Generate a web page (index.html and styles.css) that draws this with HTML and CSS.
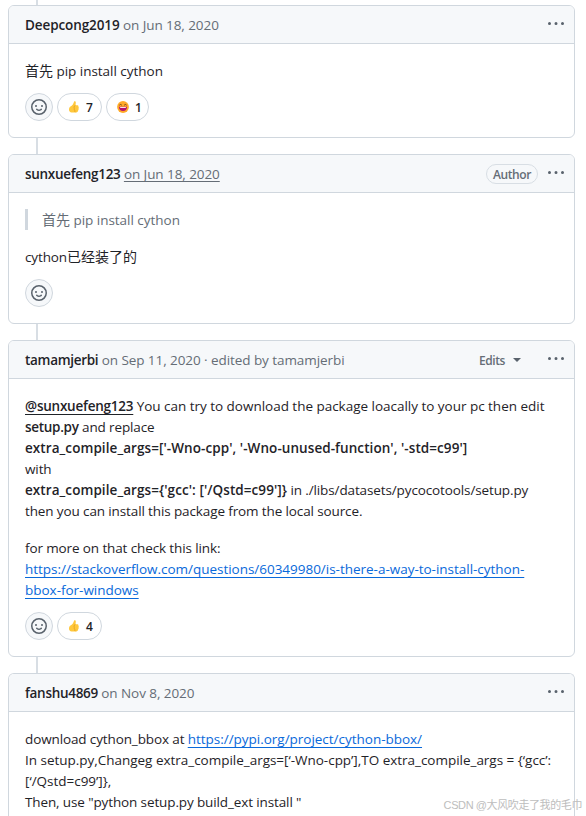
FILE: index.html
```html
<!DOCTYPE html>
<html lang="en">
<head>
    <meta charset="utf-8">
    <title>Issue comments</title>
    <link rel="stylesheet" href="styles.css">
</head>
<body>
    <!-- Shared icons -->
    <svg class="icon-defs" width="0" height="0">
        <symbol id="icon-smiley" viewBox="0 0 16 16">
            <path d="M8 0a8 8 0 1 1 0 16A8 8 0 0 1 8 0ZM1.5 8a6.5 6.5 0 1 0 13 0 6.5 6.5 0 0 0-13 0Zm3.82 1.636a.75.75 0 0 1 1.038.175l.007.009c.103.118.22.222.35.31.264.178.683.37 1.285.37.602 0 1.02-.192 1.285-.371.13-.088.247-.192.35-.31l.007-.008a.75.75 0 0 1 1.222.87l-.022-.015c.02.013.021.015.021.015v.001l-.001.002-.002.003-.005.007-.014.019a2.066 2.066 0 0 1-.184.213c-.16.166-.338.316-.53.445-.63.418-1.37.638-2.127.629-.946 0-1.652-.308-2.126-.63a3.331 3.331 0 0 1-.715-.657l-.014-.02-.005-.006-.002-.003v-.002h-.001l.613-.432-.614.43a.75.75 0 0 1 .183-1.044ZM12 7a1 1 0 1 1-2 0 1 1 0 0 1 2 0ZM5 8a1 1 0 1 1 0-2 1 1 0 0 1 0 2Z"/>
        </symbol>
        <symbol id="icon-kebab" viewBox="0 0 16 16">
            <path d="M8 9a1.5 1.5 0 1 0 0-3 1.5 1.5 0 0 0 0 3ZM1.5 9a1.5 1.5 0 1 0 0-3 1.5 1.5 0 0 0 0 3Zm13 0a1.5 1.5 0 1 0 0-3 1.5 1.5 0 0 0 0 3Z"/>
        </symbol>
        <symbol id="icon-thumb" viewBox="0 0 12 12">
            <path fill="#ffc83d" d="M6.1.4c.9-.5 1.8.2 1.7 1.3L7.5 4.2h1.7c1 0 1.5.8 1.2 1.6.5.5.5 1.2.1 1.7.3.6.2 1.2-.3 1.6.1 1.3-.8 2.3-2.2 2.300H3.600C1.900 11.400 1 10.200 1 8.500c0-1.500.7-2.600 1.900-3.200C4.400 4.500 5.500 2.500 6.100.4Z"/>
            <path fill="none" stroke="#e19a18" stroke-width=".8" d="M7.400 4.400c-1 .2-1.400.9-.9 1.600-.6.6-.6 1.300 0 1.800-.4.600-.2 1.300.3 1.700-.2.700.1 1.300.700 1.700"/>
        </symbol>
        <symbol id="icon-laugh" viewBox="0 0 12 12">
            <circle cx="6" cy="6" r="5.900" fill="#ffa928"/>
            <path fill="none" stroke="#553318" stroke-width=".8" stroke-linecap="round" d="M2.600 3.900q1-1.200 2 0M7.400 3.900q1-1.200 2 0"/>
            <path fill="#b4126f" d="M2 5.800h8C9.900 8.700 8.400 10 6 10S2.100 8.700 2 5.800Z"/>
            <path fill="#f7e3ec" d="M3 6h6l-.3.900H3.300Z"/>
        </symbol>
    </svg>

    <div class="timeline">
        <div class="comment">
            <div class="comment-header">
                <div class="comment-info"><strong class="wide">Deepcong2019</strong> <span>on Jun 18, 2020</span></div>
                <svg class="kebab"><use href="#icon-kebab"/></svg>
            </div>
            <div class="comment-body">
                <p><span class="cn">首先</span> <span class="snippet">pip install cython</span></p>
            </div>
            <div class="reactions">
                <button class="add-reaction"><svg><use href="#icon-smiley"/></svg></button>
                <button class="reaction"><svg><use href="#icon-thumb"/></svg>7</button>
                <button class="reaction laugh"><svg><use href="#icon-laugh"/></svg>1</button>
            </div>
        </div>

        <div class="comment">
            <div class="comment-header">
                <div class="comment-info"><strong>sunxuefeng123</strong> <span class="hovered">on Jun 18, 2020</span></div>
                <span class="label">Author</span>
                <svg class="kebab"><use href="#icon-kebab"/></svg>
            </div>
            <div class="comment-body">
                <blockquote><span class="cn">首先</span> <span class="snippet">pip install cython</span></blockquote>
                <p>cython<span class="cn">已经装了的</span></p>
            </div>
            <div class="reactions">
                <button class="add-reaction"><svg><use href="#icon-smiley"/></svg></button>
            </div>
        </div>

        <div class="comment">
            <div class="comment-header">
                <div class="comment-info"><strong>tamamjerbi</strong> <span>on Sep 11, 2020 · edited by tamamjerbi</span></div>
                <span class="edits">Edits</span>
                <svg class="kebab"><use href="#icon-kebab"/></svg>
            </div>
            <div class="comment-body">
                <p>
                    <a class="mention">@sunxuefeng123</a> <span class="snippet">You can try to download the package loacally to your pc then edit</span><br>
                    <strong>setup.py</strong> and replace<br>
                    <strong class="code">extra_compile_args=['-Wno-cpp', '-Wno-unused-function', '-std=c99']</strong><br>
                    with<br>
                    <strong class="code">extra_compile_args={'gcc': ['/Qstd=c99']}</strong> in ./libs/datasets/pycocotools/setup.py<br>
                    then you can install this package from the local source.
                </p>
                <p>
                    for more on that check this link:<br>
                    <a class="link">https://stackoverflow.com/questions/60349980/is-there-a-way-to-install-cython-<br>bbox-for-windows</a>
                </p>
            </div>
            <div class="reactions">
                <button class="add-reaction"><svg><use href="#icon-smiley"/></svg></button>
                <button class="reaction"><svg><use href="#icon-thumb"/></svg>4</button>
            </div>
        </div>

        <div class="comment">
            <div class="comment-header">
                <div class="comment-info"><strong>fanshu4869</strong> <span>on Nov 8, 2020</span></div>
                <svg class="kebab"><use href="#icon-kebab"/></svg>
            </div>
            <div class="comment-body">
                <p>
                    download cython_bbox at <a class="link">https://pypi.org/project/cython-bbox/</a><br>
                    <span class="snippet">In setup.py,Changeg extra_compile_args=[‘-Wno-cpp’],TO extra_compile_args = {‘gcc’:<br>
                    [‘/Qstd=c99’]},</span><br>
                    Then, use "python setup.py build_ext install "
                </p>
            </div>
        </div>
    </div>

    <div class="watermark">CSDN @大风吹走了我的毛巾</div>
</body>
</html>
```

FILE: styles.css
```css
* {
    box-sizing: border-box;
}
body {
    margin: 0;
    height: 816px;
    position: relative;
    background: #fff;
    color: #1f2328;
    font-family: "Open Sans", "Noto Sans CJK SC", sans-serif;
    font-size: 13.5px;
    line-height: 21px;
    letter-spacing: -0.12px;
}
.icon-defs {
    position: absolute;
}
/* the vertical thread line shows in the gaps between cards */
.timeline {
    display: flex;
    flex-direction: column;
    gap: 16px;
    height: 816px;
    padding: 5px 11px 0 8px;
    background: linear-gradient(#d8dee4, #d8dee4) 36px 0 / 2px 100% no-repeat;
}
.comment {
    border: 1px solid #d0d7de;
    border-radius: 6px;
    background: #fff;
}
/* last card carries on past the fold */
.comment:last-child {
    flex: 1;
    border-bottom: 0;
    border-radius: 6px 6px 0 0;
}
.comment-header {
    display: flex;
    align-items: center;
    height: 38px;
    padding: 0 10px 0 16px;
    background: #f6f8fa;
    border-bottom: 1px solid #d0d7de;
    border-radius: 5px 5px 0 0;
    color: #656d76;
}
.comment-info {
    flex: 1;
    padding-top: 1px;
    white-space: nowrap;
}
.comment-info span {
    letter-spacing: -0.07px;
}
strong,
.mention {
    font-weight: 600;
    color: #1f2328;
    letter-spacing: -0.3px;
}
.mention {
    letter-spacing: -0.23px;
}
.wide {
    letter-spacing: -0.1px;
}
.code {
    letter-spacing: 0.07px;
}
.hovered {
    text-decoration: underline;
    text-underline-offset: 2px;
    text-decoration-skip-ink: none;
}
.label {
    height: 20px;
    padding: 0 6px;
    margin-right: 10px;
    border: 1px solid #d8dee4;
    border-radius: 10px;
    font-size: 12px;
    font-weight: 600;
    line-height: 19px;
    letter-spacing: -0.4px;
}
.edits {
    display: flex;
    align-items: center;
    gap: 8px;
    margin-right: 27px;
    padding-top: 1px;
    font-size: 12px;
    font-weight: 600;
    letter-spacing: -0.4px;
}
.edits::after {
    content: "";
    border: 4px solid transparent;
    border-top-color: #59626c;
    border-bottom: 0;
}
.kebab {
    width: 16px;
    height: 16px;
    margin-bottom: 2px;
    fill: #59626c;
}
.comment-body {
    padding: 17px 16px 0;
    white-space: nowrap;
}
p,
blockquote {
    margin: 0 0 16px;
}
p:last-child {
    margin-bottom: 0;
}
blockquote {
    margin-top: -1px;
    margin-bottom: 17px;
    padding: 1px 0 0 14px;
    border-left: 3px solid #d0d7de;
    color: #656d76;
    line-height: 20px;
}
.cn {
    font-size: 14px;
    line-height: 1;
    letter-spacing: 0;
}
.mention,
.link {
    text-decoration: underline;
    text-underline-offset: 3px;
    text-decoration-skip-ink: none;
}
.link {
    color: #0969da;
    letter-spacing: -0.02px;
}
.snippet {
    letter-spacing: -0.02px;
}
.reactions {
    display: flex;
    gap: 4px;
    padding: 11px 16px 16px;
}
.reactions button {
    display: flex;
    align-items: center;
    height: 28px;
    padding: 0;
    border: 1px solid #d0d7de;
    border-radius: 14px;
    background: #fff;
    color: #1f2328;
    font: 600 12px "Open Sans", sans-serif;
}
.reactions .add-reaction {
    justify-content: center;
    width: 28px;
    background: #f6f8fa;
}
.add-reaction svg {
    width: 16px;
    height: 16px;
    fill: #59626c;
}
.reactions .reaction {
    gap: 6px;
    width: 45px;
    padding-left: 10px;
}
.reactions .laugh {
    width: 43px;
}
.reaction svg {
    width: 12px;
    height: 12px;
}
.watermark {
    position: absolute;
    right: 4px;
    bottom: 2px;
    color: #bdbdbd;
    font-family: "Liberation Sans", "Noto Sans CJK SC", sans-serif;
    font-size: 11px;
    line-height: 18px;
    letter-spacing: -0.4px;
}
```
